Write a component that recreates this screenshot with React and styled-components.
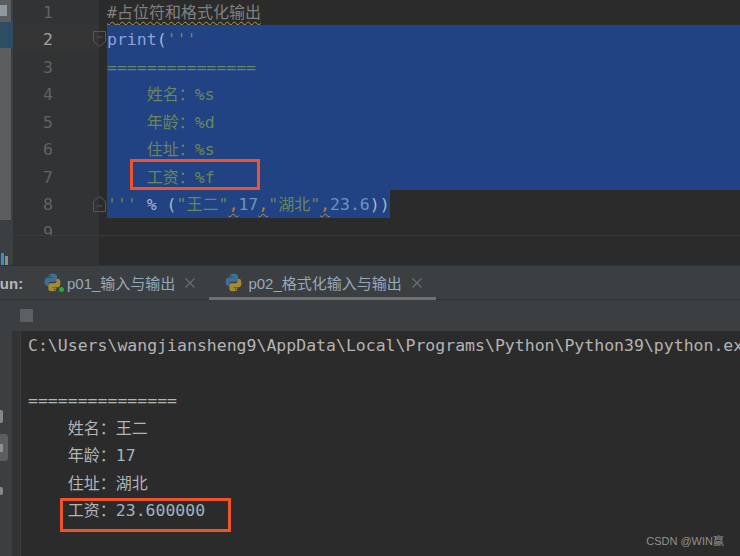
import React from "react";
import styled, { createGlobalStyle } from "styled-components";

const GlobalStyle = createGlobalStyle`
  html, body {
    margin: 0;
    padding: 0;
    background: #2b2b2b;
  }
`;

const MONO = `"DejaVu Sans Mono", "Liberation Mono", "Noto Sans CJK SC", monospace`;
const UI = `"Liberation Sans", "Noto Sans CJK SC", sans-serif`;

const Page = styled.div`
  position: relative;
  width: 740px;
  height: 556px;
  overflow: hidden;
  display: flex;
  flex-direction: column;
  background: #2b2b2b;
  font-family: ${MONO};
`;

const EditorPane = styled.div`
  position: relative;
  display: flex;
  height: 265px;
  flex: none;
  border-bottom: 1px solid #2f3133;
`;

const SideStrip = styled.div`
  width: 13px;
  flex: none;
  display: flex;
  flex-direction: column;
  background: #3c3f41;
`;

const Thumb = styled.div`
  width: 11px;
  height: 220px;
  flex: none;
  padding-top: 5px;
  box-sizing: border-box;
  background: #5b5d5f;
`;

const ThumbSquare = styled.div`
  width: 7px;
  height: 11px;
  background: #8f989e;
`;

const ActiveBlock = styled.div`
  width: 13px;
  height: 26px;
  margin-top: 6px;
  background: #2c4d63;
`;

const Bars = styled.div`
  display: flex;
  align-items: flex-end;
  gap: 1px;
  margin-top: auto;
  padding-left: 1px;
`;

const Bar = styled.div`
  width: 3px;
  height: ${(p) => p.$h}px;
  background: ${(p) => p.$color};
`;

const EditorMain = styled.div`
  flex: 1;
  min-width: 0;
  display: flex;
  flex-direction: column;
`;

const Lines = styled.div`
  height: 235px;
  flex: none;
  overflow: hidden;
`;

const LineList = styled.div`
  margin-top: -2.5px;
`;

const Line = styled.div`
  display: flex;
  height: 27.5px;
  line-height: 29px;
  font-size: 16.5px;
  white-space: pre;
`;

const LineNumber = styled.div`
  position: relative;
  width: 86px;
  flex: none;
  box-sizing: border-box;
  padding-left: 30px;
  background: ${(p) => (p.$current ? "#353535" : "#313335")};
  color: ${(p) => (p.$current ? "#a4a3a3" : "#606366")};
`;

const FoldMark = styled.svg`
  position: absolute;
  left: 80px;
  top: 6px;
  width: 13px;
  height: 16px;
`;

const CodeCell = styled.div`
  flex: 1;
  margin-left: 8px;
  min-width: 0;
  background: ${(p) => (p.$selected ? "#214283" : "transparent")};
`;

const SelectedTail = styled.div`
  width: fit-content;
  height: 27.5px;
  background: #214283;
`;

const Token = styled.span`
  color: ${(p) => p.$color};
`;

const Han = styled.span`
  font-size: 16px;
`;

const Comment = styled.span`
  color: #808080;
  text-decoration: underline wavy #a89f58 1px;
  text-underline-offset: 3px;
`;

const Comma = styled.span`
  color: #cc7832;
  text-decoration: underline wavy #a8925a 1px;
  text-underline-offset: 3px;
`;

const EditorFooter = styled.div`
  flex: 1;
  display: flex;
  border-top: 1px solid #3a3a3a;
`;

const FooterGutter = styled.div`
  width: 86px;
  background: #313335;
`;

const TabBar = styled.div`
  display: flex;
  height: 33px;
  flex: none;
  background: #3c3f41;
  border-bottom: 1px solid #323232;
  font-family: ${UI};
  font-size: 15px;
`;

const RunLabel = styled.div`
  width: 28px;
  flex: none;
  overflow: hidden;
  line-height: 35px;
  font-weight: 700;
  color: #b4b8bb;
  text-indent: -11px;
  white-space: nowrap;
`;

const Tab = styled.div`
  display: flex;
  align-items: center;
  box-sizing: border-box;
  height: 34px;
  padding: 2px 14px 0 15px;
  color: #96a9ba;
  border-bottom: ${(p) => (p.$active ? "3px solid #6e7175" : "3px solid transparent")};
`;

const TabIconWrap = styled.span`
  position: relative;
  display: flex;
  width: 19px;
  height: 19px;
  margin-right: 5px;
`;

const RunDot = styled.span`
  position: absolute;
  right: -2px;
  bottom: 0;
  width: 5px;
  height: 5px;
  border-radius: 50%;
  background: #1fae37;
`;

const CloseIcon = styled.svg`
  width: 10px;
  height: 10px;
  margin-left: 10px;
`;

const RunToolbar = styled.div`
  display: flex;
  align-items: center;
  height: 31px;
  flex: none;
  padding-left: 20px;
  background: #3c3f41;
`;

const StopButton = styled.div`
  width: 13px;
  height: 13px;
  background: #5d6062;
`;

const ConsolePane = styled.div`
  position: relative;
  flex: 1;
  min-height: 0;
  display: flex;
`;

const ConsoleStrip = styled.div`
  width: 12px;
  flex: none;
  display: flex;
  flex-direction: column;
  align-items: flex-start;
  padding-top: 79px;
  box-sizing: border-box;
  background: #3c3f41;
`;

const StripGlyph = styled.div`
  width: 3px;
  height: ${(p) => p.$h}px;
  margin-top: ${(p) => p.$top}px;
  border-radius: 0 2px 2px 0;
  background: #85888a;
`;

const StripActive = styled.div`
  display: flex;
  align-items: center;
  width: 8px;
  height: 27px;
  margin-top: 11px;
  border-radius: 0 3px 3px 0;
  background: #5b5e60;
`;

const StripActiveGlyph = styled.div`
  width: 3px;
  height: 8px;
  background: #8f9294;
`;

const ConsoleGutter = styled.div`
  width: 8px;
  flex: none;
  background: #313335;
  border-right: 1px solid #3d3d3d;
`;

const ConsoleBody = styled.div`
  flex: 1;
  min-width: 0;
  overflow: hidden;
  padding-left: 7px;
`;

const ConsoleLine = styled.div`
  height: 27.5px;
  line-height: 29px;
  font-size: 16.5px;
  white-space: pre;
  color: #b4b4b4;
`;

const Num = styled.span`
  color: #9fb3c4;
`;

const Callout = styled.div`
  position: absolute;
  left: ${(p) => p.$x}px;
  top: ${(p) => p.$y}px;
  width: ${(p) => p.$w}px;
  height: ${(p) => p.$h}px;
  box-sizing: border-box;
  border: 3px solid #f0522a;
  pointer-events: none;
`;

const Watermark = styled.div`
  position: absolute;
  right: 16px;
  bottom: 7px;
  font-family: ${UI};
  font-size: 11px;
  line-height: 16px;
  color: #919191;
`;

const GREEN = "#6a8759";
const BLUE = "#6897bb";
const PLAIN = "#a9b7c6";

const PythonIcon = () => (
  <svg width="19" height="19" viewBox="0 0 24 24">
    <path
      fill="#3f6f96"
      d="M11.9 1C7 1 7.3 3.1 7.3 3.1v2.3h4.7V6H5.5S2 5.7 2 11.2s3 5.2 3 5.2h1.9v-2.5s-.1-3 3-3h4.9s2.9 0 2.9-2.8V3.6S17.3 1 11.9 1zM9.2 2.6a.9.9 0 1 1 0 1.8.9.9 0 0 1 0-1.8z"
    />
    <path
      fill="#a68a2e"
      d="M12.1 23c4.9 0 4.6-2.1 4.6-2.1v-2.3H12V18h6.5s3.5.3 3.5-5.2-3-5.2-3-5.2h-1.9v2.5s.1 3-3 3H9.7s-2.9 0-2.9 2.8v4.5S6.7 23 12.1 23zm2.7-1.6a.9.9 0 1 1 0-1.8.9.9 0 0 1 0 1.8z"
    />
  </svg>
);

const Close = () => (
  <CloseIcon viewBox="0 0 10 10">
    <path d="M.5.5l9 9M9.5.5l-9 9" stroke="#6a6d70" strokeWidth="1.3" fill="none" />
  </CloseIcon>
);

const FoldOpen = () => (
  <FoldMark viewBox="0 0 13 16">
    <path d="M.5.5h12v10l-6 5-6-5z M3.5 6h6" fill="none" stroke="#555759" />
  </FoldMark>
);

const FoldEnd = () => (
  <FoldMark viewBox="0 0 13 16">
    <path d="M.5 15.5h12v-10l-6-5-6 5z M3.5 10h6" fill="none" stroke="#555759" />
  </FoldMark>
);

const field = (label, value) => (
  <>
    {"    "}
    <Han>{label}：</Han>
    {value}
  </>
);

const codeLines = [
  { no: 1, code: <Comment>#<Han>占位符和格式化输出</Han></Comment> },
  {
    no: 2,
    selected: true,
    current: true,
    fold: <FoldOpen />,
    code: (
      <>
        <Token $color="#94a0d4">print</Token>
        <Token $color={PLAIN}>(</Token>
        <Token $color={GREEN}>'''</Token>
      </>
    ),
  },
  { no: 3, selected: true, code: <Token $color={GREEN}>===============</Token> },
  { no: 4, selected: true, code: <Token $color={GREEN}>{field("姓名", "%s")}</Token> },
  { no: 5, selected: true, code: <Token $color={GREEN}>{field("年龄", "%d")}</Token> },
  { no: 6, selected: true, code: <Token $color={GREEN}>{field("住址", "%s")}</Token> },
  { no: 7, selected: true, code: <Token $color={GREEN}>{field("工资", "%f")}</Token> },
  {
    no: 8,
    fold: <FoldEnd />,
    code: (
      <SelectedTail>
        <Token $color={GREEN}>'''</Token>
        <Token $color={PLAIN}> % (</Token>
        <Token $color={GREEN}>"<Han>王二</Han>"</Token>
        <Comma>,</Comma>
        <Token $color={BLUE}>17</Token>
        <Comma>,</Comma>
        <Token $color={GREEN}>"<Han>湖北</Han>"</Token>
        <Comma>,</Comma>
        <Token $color={BLUE}>23.6</Token>
        <Token $color={PLAIN}>))</Token>
      </SelectedTail>
    ),
  },
  { no: 9, code: null },
];

const App = () => {
  return (
    <Page>
      <GlobalStyle />
      <EditorPane>
        <SideStrip>
          <Thumb>
            <ThumbSquare />
            <ActiveBlock />
          </Thumb>
          <Bars>
            <Bar $h={12} $color="#3592c4" />
            <Bar $h={9} $color="#8a8f93" />
          </Bars>
        </SideStrip>
        <EditorMain>
          <Lines>
            <LineList>
              {codeLines.map((line) => (
                <Line key={line.no}>
                  <LineNumber $current={line.current}>
                    {line.no}
                    {line.fold}
                  </LineNumber>
                  <CodeCell $selected={line.selected}>{line.code}</CodeCell>
                </Line>
              ))}
            </LineList>
          </Lines>
          <EditorFooter>
            <FooterGutter />
          </EditorFooter>
        </EditorMain>
        <Callout $x={130} $y={159} $w={130} $h={31} />
      </EditorPane>

      <TabBar>
        <RunLabel>Run:</RunLabel>
        <Tab>
          <TabIconWrap>
            <PythonIcon />
            <RunDot />
          </TabIconWrap>
          p01_输入与输出
          <Close />
        </Tab>
        <Tab $active>
          <TabIconWrap>
            <PythonIcon />
          </TabIconWrap>
          p02_格式化输入与输出
          <Close />
        </Tab>
      </TabBar>
      <RunToolbar>
        <StopButton />
      </RunToolbar>

      <ConsolePane>
        <ConsoleStrip>
          <StripGlyph $h={13} $top={0} />
          <StripActive>
            <StripActiveGlyph />
          </StripActive>
          <StripGlyph $h={8} $top={26} />
        </ConsoleStrip>
        <ConsoleGutter />
        <ConsoleBody>
          <ConsoleLine>C:\Users\wangjiansheng9\AppData\Local\Programs\Python\Python39\python.exe</ConsoleLine>
          <ConsoleLine />
          <ConsoleLine>===============</ConsoleLine>
          <ConsoleLine>{"    "}<Han>姓名：王二</Han></ConsoleLine>
          <ConsoleLine>{"    "}<Han>年龄：</Han><Num>17</Num></ConsoleLine>
          <ConsoleLine>{"    "}<Han>住址：湖北</Han></ConsoleLine>
          <ConsoleLine>{"    "}<Han>工资：</Han><Num>23.600000</Num></ConsoleLine>
        </ConsoleBody>
        <Callout $x={60} $y={167} $w={171} $h={34} />
      </ConsolePane>
      <Watermark>CSDN @WIN赢</Watermark>
    </Page>
  );
};

export default App;
